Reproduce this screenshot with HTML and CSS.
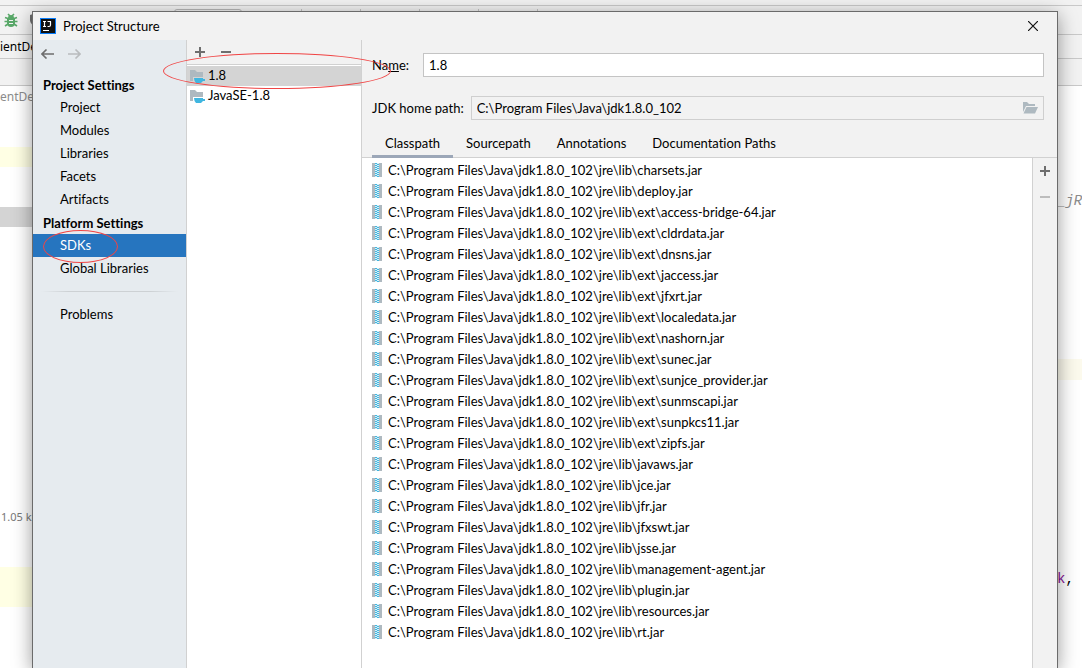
FILE: index.html
```
<!DOCTYPE html>
<html lang="en">
<head>
    <meta charset="UTF-8">
    <meta name="viewport" content="width=device-width, initial-scale=1.0">
    <link rel="stylesheet" href="styles.css">
    <title>Project Structure</title>
</head>
<body>
    <!-- editor window behind the dialog -->
    <div class="ide">
        <div class="ide-menu"></div>
        <div class="ide-toolbar">
            <svg class="bug" viewBox="0 0 14 15" width="14" height="15">
                <path d="M4 1l2 2M10 1l-2 2M1 4.500l3 1M13 4.500l-3 1M.5 8.500h3M10.500 8.500h3M1 13l3-2M13 13l-3-2" stroke="#59a869" stroke-width="1.600" fill="none"/>
                <path d="M4 5a3 3 0 0 1 6 0z" fill="#59a869"/>
                <path d="M3 5h8v5a4 4 0 0 1-8 0z" fill="#59a869"/>
                <path d="M5 7.500h4M5 10.500h4" stroke="#f2f2f2"/>
            </svg>
            <svg class="shield" viewBox="0 0 12 14" width="12" height="14">
                <path d="M0 2l6-2 6 2v5c0 3-3 6-6 7-3-1-6-4-6-7z" fill="#6e6e6e"/>
            </svg>
            <div class="run-config"></div>
            <div class="ticks"><i></i><i></i><i></i><i></i><i></i></div>
        </div>
        <div class="ide-crumbs">ientDe</div>
        <div class="ide-tabs"></div>
        <div class="ide-editor">
            <div class="pane pane-left">
                <span class="path">entDer</span>
                <span class="changed"></span>
                <span class="selected-line"></span>
                <span class="size">1.05 kB</span>
                <span class="changed-block"></span>
            </div>
            <div class="pane pane-right">
                <span class="hint">_jR</span>
                <span class="caret-line"></span>
                <span class="code"><b>k</b>,</span>
            </div>
        </div>
    </div>

    <div class="dialog" role="dialog" aria-labelledby="dialog-title">
        <header class="titlebar">
            <svg class="logo" viewBox="0 0 16 16" width="16" height="16">
                <rect width="16" height="16" fill="#087cfa"/>
                <rect x="1" y="1" width="14" height="14" fill="#111"/>
                <path d="M3 3.500h3M4.500 3.500v5M3 8.500h3M7.500 3.500H11M10.500 3.500v3.500q0 1.500-1.500 1.500H7.500" stroke="#fff" stroke-width="1.200" fill="none"/>
                <path d="M3 12.500h6" stroke="#fff"/>
            </svg>
            <span id="dialog-title">Project Structure</span>
            <button class="close" aria-label="Close">
                <svg viewBox="0 0 10 10" width="10" height="10"><path d="M0 0l10 10M10 0L0 10" stroke="#111" stroke-width="1.200"/></svg>
            </button>
        </header>

        <div class="content">
            <nav class="sidebar">
                <div class="history">
                    <button aria-label="Back">
                        <svg viewBox="0 0 13 10" width="13" height="10"><path d="M13 5H1M5.500 .5L1 5l4.500 4.500" stroke="#6e6e6e" stroke-width="1.600" fill="none"/></svg>
                    </button>
                    <button aria-label="Forward" disabled>
                        <svg viewBox="0 0 13 10" width="13" height="10"><path d="M0 5h12M7.500 .5L12 5 7.500 9.500" stroke="#b9bcbe" stroke-width="1.600" fill="none"/></svg>
                    </button>
                </div>
                <h2>Project Settings</h2>
                <a href="#project">Project</a>
                <a href="#modules">Modules</a>
                <a href="#libraries">Libraries</a>
                <a href="#facets">Facets</a>
                <a href="#artifacts">Artifacts</a>
                <h2>Platform Settings</h2>
                <a href="#sdks" class="active">SDKs</a>
                <a href="#global">Global Libraries</a>
                <hr>
                <a href="#problems">Problems</a>
            </nav>

            <section class="sdks">
                <div class="sdk-tools">
                    <button class="plus" aria-label="Add SDK"></button>
                    <button class="minus" aria-label="Remove SDK"></button>
                </div>
                <button class="sdk current">
                    <svg viewBox="0 0 16 16" width="16" height="16">
                        <path d="M1 3h5l2 2h6v5H4v4H1z" fill="#aeb9c0"/>
                        <path d="M5 11h9v1h2v2h-2l-2 2H7q-2-2-2-5z" fill="#40b6e0"/>
                    </svg>
                    1.8
                </button>
                <button class="sdk">
                    <svg viewBox="0 0 16 16" width="16" height="16">
                        <path d="M1 3h5l2 2h6v5H4v4H1z" fill="#aeb9c0"/>
                        <path d="M5 11h9v1h2v2h-2l-2 2H7q-2-2-2-5z" fill="#40b6e0"/>
                    </svg>
                    JavaSE-1.8
                </button>
            </section>

            <main class="details">
                <div class="field name-field">
                    <label for="name">Na<u>m</u>e:</label>
                    <input id="name" type="text" value="1.8">
                </div>
                <div class="field home-field">
                    <label for="home">JDK home path:</label>
                    <div class="browse">
                        <input id="home" type="text" value="C:\Program Files\Java\jdk1.8.0_102" readonly>
                        <button aria-label="Browse">
                            <svg viewBox="0 0 16 12" width="16" height="12">
                                <path d="M1 0h4l2 2h6v2H4L1 10z" fill="#aeb9c0"/>
                                <path d="M4.500 5H16l-3 6.500H1.500z" fill="#aeb9c0"/>
                            </svg>
                        </button>
                    </div>
                </div>
                <div class="tabs" role="tablist">
                    <button role="tab" class="tab open" aria-selected="true">Classpath</button>
                    <button role="tab" class="tab">Sourcepath</button>
                    <button role="tab" class="tab">Annotations</button>
                    <button role="tab" class="tab">Documentation Paths</button>
                </div>
                <div class="roots">
                    <ul class="jars">
                        <li>C:\Program Files\Java\jdk1.8.0_102\jre\lib\charsets.jar</li>
                        <li>C:\Program Files\Java\jdk1.8.0_102\jre\lib\deploy.jar</li>
                        <li>C:\Program Files\Java\jdk1.8.0_102\jre\lib\ext\access-bridge-64.jar</li>
                        <li>C:\Program Files\Java\jdk1.8.0_102\jre\lib\ext\cldrdata.jar</li>
                        <li>C:\Program Files\Java\jdk1.8.0_102\jre\lib\ext\dnsns.jar</li>
                        <li>C:\Program Files\Java\jdk1.8.0_102\jre\lib\ext\jaccess.jar</li>
                        <li>C:\Program Files\Java\jdk1.8.0_102\jre\lib\ext\jfxrt.jar</li>
                        <li>C:\Program Files\Java\jdk1.8.0_102\jre\lib\ext\localedata.jar</li>
                        <li>C:\Program Files\Java\jdk1.8.0_102\jre\lib\ext\nashorn.jar</li>
                        <li>C:\Program Files\Java\jdk1.8.0_102\jre\lib\ext\sunec.jar</li>
                        <li>C:\Program Files\Java\jdk1.8.0_102\jre\lib\ext\sunjce_provider.jar</li>
                        <li>C:\Program Files\Java\jdk1.8.0_102\jre\lib\ext\sunmscapi.jar</li>
                        <li>C:\Program Files\Java\jdk1.8.0_102\jre\lib\ext\sunpkcs11.jar</li>
                        <li>C:\Program Files\Java\jdk1.8.0_102\jre\lib\ext\zipfs.jar</li>
                        <li>C:\Program Files\Java\jdk1.8.0_102\jre\lib\javaws.jar</li>
                        <li>C:\Program Files\Java\jdk1.8.0_102\jre\lib\jce.jar</li>
                        <li>C:\Program Files\Java\jdk1.8.0_102\jre\lib\jfr.jar</li>
                        <li>C:\Program Files\Java\jdk1.8.0_102\jre\lib\jfxswt.jar</li>
                        <li>C:\Program Files\Java\jdk1.8.0_102\jre\lib\jsse.jar</li>
                        <li>C:\Program Files\Java\jdk1.8.0_102\jre\lib\management-agent.jar</li>
                        <li>C:\Program Files\Java\jdk1.8.0_102\jre\lib\plugin.jar</li>
                        <li>C:\Program Files\Java\jdk1.8.0_102\jre\lib\resources.jar</li>
                        <li>C:\Program Files\Java\jdk1.8.0_102\jre\lib\rt.jar</li>
                    </ul>
                    <div class="root-tools">
                        <button class="plus" aria-label="Add root"></button>
                        <button class="minus" aria-label="Remove root" disabled></button>
                    </div>
                </div>
            </main>
        </div>
    </div>

    <!-- red marks drawn over the dialog -->
    <div class="mark mark-sdk"></div>
    <div class="mark mark-menu"></div>
</body>
</html>
```
FILE: styles.css
```
* {
    box-sizing: border-box;
}

body {
    position: relative;
    height: 100vh;
    margin: 0;
    overflow: hidden;
    font-family: Lato, "Noto Sans", sans-serif;
    font-size: 13px;
    font-variant-ligatures: none;
    color: #000;
    background-color: #fff;
}

button {
    display: flex;
    align-items: center;
    justify-content: center;
    padding: 0;
    border: none;
    background: none;
    font: inherit;
    font-variant-ligatures: none;
    color: inherit;
}

/* editor behind */
.ide {
    display: flex;
    flex-direction: column;
    height: 100%;
}

.ide-menu,
.ide-toolbar,
.ide-crumbs,
.ide-tabs {
    flex: none;
    border-bottom: 1px solid #c9c9c9;
    background-color: #f2f2f2;
}

.ide-menu {
    height: 6px;
}

.ide-toolbar {
    display: flex;
    height: 29px;
    padding: 3px 4px;
}

.bug {
    margin-top: 4px;
}

.shield {
    margin: 4px 0 0 12px;
}

.run-config {
    width: 68px;
    height: 22px;
    margin-left: 132px;
    border: 1px solid #b8b8b8;
    border-radius: 3px;
}

.ticks {
    display: flex;
    gap: 58px;
    margin-left: 59px;
}

.ticks i {
    width: 1px;
    background-color: #c4c4c4;
}

.ide-crumbs {
    height: 24px;
    line-height: 23px;
    font-family: "Noto Sans", sans-serif;
    font-size: 12px;
}

.ide-tabs {
    height: 27px;
}

.ide-editor {
    display: flex;
    flex: 1;
    justify-content: space-between;
    min-height: 0;
}

.pane {
    display: grid;
    white-space: nowrap;
}

.pane-left {
    width: 40px;
    grid-template-rows: 21px;
    grid-auto-rows: 20px;
    font-family: "Noto Sans", sans-serif;
}

.pane-right {
    width: 25px;
    grid-auto-rows: 21px;
    font-family: "Liberation Mono", monospace;
    font-size: 14px;
    line-height: 21px;
}

.path {
    grid-row: 1;
    line-height: 21px;
    font-size: 12px;
    color: #8c8c8c;
}

.changed {
    grid-row: 4;
    background-color: #ffffe4;
}

.selected-line {
    grid-row: 7;
    background-color: #d4d4d4;
}

.size {
    grid-row: 22;
    padding-left: 1px;
    line-height: 20px;
    font-size: 11px;
    color: #777;
}

.changed-block {
    grid-row: 25 / span 2;
    background-color: #ffffe4;
}

.hint {
    grid-row: 6;
    font-style: italic;
    color: #8c8c8c;
}

.caret-line {
    grid-row: 14;
    background-color: #fcfaed;
}

.code {
    grid-row: 24;
}

.code b {
    font-weight: normal;
    color: #871094;
}

/* dialog */
.dialog {
    position: absolute;
    top: 11px;
    right: 24px;
    bottom: 0;
    left: 32px;
    display: flex;
    flex-direction: column;
    border: 1px solid #6b6b6b;
    border-bottom: none;
    background-color: #f2f2f2;
    box-shadow: 0 4px 18px rgba(0, 0, 0, 0.4);
}

.titlebar {
    display: flex;
    align-items: center;
    gap: 7px;
    height: 28px;
    padding: 0 19px 0 7px;
}

.close {
    width: 10px;
    margin-left: auto;
}

.content {
    display: flex;
    flex: 1;
    min-height: 0;
}

.sidebar {
    flex: none;
    width: 154px;
    border-right: 1px solid #d1d1d1;
    background-color: #e6ebef;
}

.history {
    display: flex;
    gap: 14px;
    height: 28px;
    margin-bottom: 5px;
    padding-left: 8px;
}

.sidebar h2 {
    margin: 0;
    padding: 1px 0 0 10px;
    font-size: 13px;
    line-height: 22px;
}

.sidebar a {
    display: block;
    padding-left: 27px;
    line-height: 23px;
    color: #000;
    text-decoration: none;
}

.sidebar .active {
    color: #fff;
    background-color: #2675bf;
}

.sidebar hr {
    height: 1px;
    margin: 11px 8px;
    border: none;
    background: linear-gradient(to right, transparent, #cdd1d4 20%, #cdd1d4 80%, transparent);
}

.sdks {
    flex: none;
    width: 175px;
    border-right: 1px solid #d1d1d1;
    background-color: #fff;
}

.sdk-tools {
    display: flex;
    gap: 14px;
    height: 25px;
    margin-bottom: 1px;
    padding-left: 7px;
    border-bottom: 1px solid #d1d1d1;
    background-color: #f2f2f2;
}

.plus,
.minus {
    width: 12px;
    height: 24px;
    background: linear-gradient(#6e6e6e, #6e6e6e) center / 10px 2px no-repeat;
}

.plus {
    background: linear-gradient(#6e6e6e, #6e6e6e) center / 10px 2px no-repeat,
                linear-gradient(#6e6e6e, #6e6e6e) center / 2px 10px no-repeat;
}

.minus:disabled {
    opacity: 0.4;
}

.sdk {
    justify-content: flex-start;
    gap: 3px;
    width: 100%;
    height: 20px;
    padding: 0 2px 2px;
}

.sdk.current {
    background-color: #d4d4d4;
}

.details {
    display: flex;
    flex: 1;
    flex-direction: column;
    min-width: 0;
}

.field {
    display: flex;
    align-items: center;
    height: 24px;
    margin: 0 13px 0 10px;
}

.name-field {
    gap: 14px;
    margin-top: 13px;
}

.home-field {
    gap: 7px;
    margin-top: 19px;
}

.field label {
    white-space: nowrap;
}

.field input {
    flex: 1;
    min-width: 0;
    height: 24px;
    padding: 0 5px;
    border: 1px solid #c4c4c4;
    outline: none;
    background-color: #fff;
    font: inherit;
}

.browse {
    display: flex;
    flex: 1;
    border: 1px solid #cfcfcf;
}

.field .browse input {
    height: 22px;
    border: none;
    background-color: transparent;
}

.browse button {
    width: 26px;
}

.tabs {
    display: flex;
    height: 38px;
    padding-left: 10px;
    border-bottom: 1px solid #d1d1d1;
}

.tab {
    height: 38px;
    padding: 10px 13px 0;
    border-bottom: 3px solid transparent;
}

.tab.open {
    border-bottom-color: #9ca7b8;
}

.roots {
    display: flex;
    flex: 1;
    min-height: 0;
    background-color: #fff;
}

.jars {
    flex: 1;
    margin: 0;
    padding: 1px 10px;
    list-style: none;
    overflow: hidden;
}

.jars li {
    display: flex;
    align-items: center;
    gap: 6px;
    height: 21px;
    white-space: nowrap;
}

/* archive icon with a zipper down the middle */
.jars li::before {
    content: "";
    width: 10px;
    height: 15px;
    background: url("data:image/svg+xml,%3Csvg xmlns='http://www.w3.org/2000/svg' width='10' height='14' shape-rendering='crispEdges'%3E%3Cpath d='M0 0h10v14H0z' fill='%23aeb9c0'/%3E%3Cpath d='M3 0h4v14H3z' fill='%23d5f0f9'/%3E%3Cpath d='M4 0v14' stroke='%2340b6e0' stroke-width='2' stroke-dasharray='1 1'/%3E%3Cpath d='M6 1v13' stroke='%2340b6e0' stroke-width='2' stroke-dasharray='1 1'/%3E%3C/svg%3E") bottom no-repeat;
}

.root-tools {
    width: 25px;
    padding: 1px 6px;
    border-left: 1px solid #d1d1d1;
    background-color: #f2f2f2;
}

.root-tools .minus {
    margin-top: 2px;
}

.mark {
    position: absolute;
    border: 1px solid #f04545;
    border-radius: 50%;
    pointer-events: none;
}

.mark-sdk {
    top: 53px;
    left: 163px;
    width: 228px;
    height: 36px;
}

.mark-menu {
    top: 230px;
    left: 43px;
    width: 75px;
    height: 33px;
}
```
